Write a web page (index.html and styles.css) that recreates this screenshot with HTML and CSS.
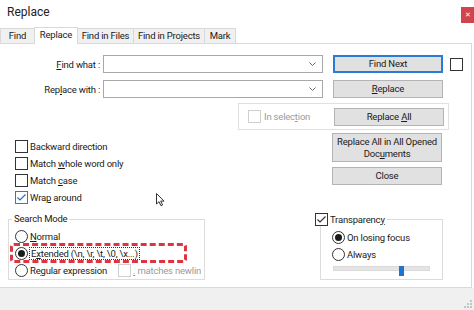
FILE: index.html
```html
<!DOCTYPE html>
<html>
<head>
  <title>Replace</title>
  <link rel="stylesheet" href="styles.css">
</head>
<body>
  <div class="titlebar">
    <span class="title">Replace</span>
    <span class="close">&#x2715;</span>
  </div>

  <div class="tabs">
    <span class="tab tab-find">Find</span>
    <span class="tab tab-replace active">Replace</span>
    <span class="tab tab-files">Find in Files</span>
    <span class="tab tab-projects">Find in Projects</span>
    <span class="tab tab-mark">Mark</span>
  </div>

  <div class="panel">
    <div class="row first">
      <label class="field-label"><u>F</u>ind what :</label>
      <div class="combo">
        <svg class="chevron" width="7" height="4" viewBox="0 0 7 4"><polyline points="0.5,0.5 3.5,3.5 6.5,0.5" fill="none" stroke="#666" stroke-width="1"/></svg>
      </div>
      <button class="btn focused">Find Next</button>
      <span class="box side-box"></span>
    </div>
    <div class="row second">
      <label class="field-label">Rep<u>l</u>ace with :</label>
      <div class="combo">
        <svg class="chevron" width="7" height="4" viewBox="0 0 7 4"><polyline points="0.5,0.5 3.5,3.5 6.5,0.5" fill="none" stroke="#666" stroke-width="1"/></svg>
      </div>
      <button class="btn"><u>R</u>eplace</button>
    </div>

    <div class="selbox">
      <span class="box disabled"></span>
      <span class="muted sel-label">In selec<u>t</u>ion</span>
      <button class="btn sel-btn">Replace <u>A</u>ll</button>
    </div>

    <div class="middle">
      <div class="options">
        <div class="opt"><span class="box"></span><span>Backward direction</span></div>
        <div class="opt"><span class="box"></span><span>Match <u>w</u>hole word only</span></div>
        <div class="opt"><span class="box"></span><span>Match <u>c</u>ase</span></div>
        <div class="opt">
          <span class="box blue">
            <svg width="11" height="11" viewBox="0 0 11 11"><polyline points="1.5,5.5 4,8 9.5,2.5" fill="none" stroke="#1f6fc4" stroke-width="1.2"/></svg>
          </span>
          <span>Wra<u>p</u> around</span>
        </div>
      </div>
      <div class="actions">
        <button class="btn tall">Replace All in All Opened<br>Doc<u>u</u>ments</button>
        <button class="btn close-btn">Close</button>
      </div>
    </div>

    <div class="groups">
      <fieldset class="group search-mode">
        <legend>Search Mode</legend>
        <div class="opt radio-row first-radio"><span class="radio"></span><span><u>N</u>ormal</span></div>
        <div class="opt radio-row"><span class="radio on"></span><span class="focus-text">E<u>x</u>tended (\n, \r, \t, \0, \x...)</span></div>
        <div class="opt radio-row">
          <span class="radio"></span><span>Re<u>g</u>ular expression</span>
          <span class="box disabled newline-box"></span>
          <span class="muted newline-text"><u>.</u> matches newline</span>
        </div>
      </fieldset>

      <fieldset class="group transparency">
        <legend>
          <span class="box">
            <svg width="11" height="11" viewBox="0 0 11 11"><polyline points="1.5,5.5 4,8 9.5,2.5" fill="none" stroke="#333" stroke-width="1.2"/></svg>
          </span>
          <span>Transparenc<u>y</u></span>
        </legend>
        <div class="opt radio-row first-radio"><span class="radio on"></span><span>On losing focus</span></div>
        <div class="opt radio-row"><span class="radio"></span><span>Always</span></div>
        <div class="slider">
          <div class="track"></div>
          <div class="thumb"></div>
        </div>
      </fieldset>
    </div>

    <!-- annotation drawn over the screenshot -->
    <div class="highlight"></div>

    <svg class="cursor" width="10" height="14" viewBox="0 0 10 14">
      <path d="M0.5 0.5 L0.5 11 L3 8.7 L5 12.8 L6.6 12 L4.7 8.1 L8 8.1 Z" fill="#fff" stroke="#333" stroke-width="1" stroke-linejoin="round"/>
    </svg>
  </div>

  <div class="footer">
    <svg class="grip" width="8" height="8" viewBox="0 0 8 8">
      <rect x="6" y="0" width="2" height="2" fill="#c4c4c4"/>
      <rect x="3" y="3" width="2" height="2" fill="#c4c4c4"/>
      <rect x="6" y="3" width="2" height="2" fill="#c4c4c4"/>
      <rect x="0" y="6" width="2" height="2" fill="#c4c4c4"/>
      <rect x="3" y="6" width="2" height="2" fill="#c4c4c4"/>
      <rect x="6" y="6" width="2" height="2" fill="#c4c4c4"/>
    </svg>
  </div>
</body>
</html>
```

FILE: styles.css
```css
body {
  margin: 0;
  width: 474px;
  height: 310px;
  overflow: hidden;
  background: #fff;
  color: #1a1a1a;
  font-family: Roboto, "Liberation Sans", sans-serif;
  font-size: 9.5px;
  letter-spacing: -0.2px;
}

u {
  text-decoration-thickness: 1px;
  text-underline-offset: 1px;
}

/* title bar */
.titlebar {
  height: 27px;
  display: flex;
  justify-content: space-between;
  align-items: flex-start;
}

.title {
  margin: 4px 0 0 7px;
  font-size: 12px;
  letter-spacing: 0;
  line-height: 16px;
  color: #222;
}

.close {
  width: 13px;
  height: 16px;
  margin-top: 7px;
  background: #d1444c;
  color: #fff;
  font-size: 7px;
  line-height: 16px;
  text-align: center;
}

/* tabs */
.tabs {
  height: 16px;
  display: flex;
  align-items: flex-end;
  position: relative;
  z-index: 1;
}

.tab {
  box-sizing: border-box;
  height: 15px;
  border: 1px solid #d9d9d9;
  border-bottom: none;
  margin-right: -1px;
  background: #f0f0f0;
  line-height: 14px;
  text-align: center;
}

.tab.active {
  height: 17px;
  margin-bottom: -1px;
  background: #fff;
  line-height: 14px;
}

.tab-find { width: 35px; }
.tab-replace { width: 44px; }
.tab-files { width: 57px; }
.tab-projects { width: 72px; }
.tab-mark { width: 32px; }

/* panel */
.panel {
  position: relative;
  box-sizing: border-box;
  width: 472px;
  height: 245px;
  border: 1px solid #d9d9d9;
  border-left: none;
}

.row {
  display: flex;
  align-items: center;
  height: 18px;
}

.row.first { margin-top: 11px; }
.row.second { margin-top: 7px; }

.field-label {
  width: 100px;
  text-align: right;
}

.combo {
  position: relative;
  box-sizing: border-box;
  width: 220px;
  height: 18px;
  margin-left: 3px;
  border: 1px solid #a8a8a8;
  background: #fff;
}

.chevron {
  position: absolute;
  right: 6px;
  top: 6px;
}

.btn {
  box-sizing: border-box;
  width: 110px;
  height: 18px;
  margin: 0 0 0 10px;
  padding: 0;
  border: 1px solid #b4b4b4;
  background: #e1e1e1;
  font: inherit;
  letter-spacing: inherit;
  color: #1a1a1a;
  line-height: 12px;
  white-space: nowrap;
}

.btn.focused {
  border: 2px solid #2a7bd6;
}

.side-box {
  margin-left: 7px;
}

/* check boxes and radios */
.box {
  box-sizing: border-box;
  display: inline-flex;
  align-items: center;
  justify-content: center;
  width: 13px;
  height: 13px;
  border: 1px solid #333;
  background: #fff;
  flex: none;
}

.box.blue { border-color: #2a7bd6; }
.box.disabled { border-color: #cfcfcf; }

.radio {
  box-sizing: border-box;
  display: inline-flex;
  align-items: center;
  justify-content: center;
  width: 13px;
  height: 13px;
  border: 1px solid #333;
  border-radius: 50%;
  background: #fff;
  flex: none;
}

.radio.on::after {
  content: "";
  width: 7px;
  height: 7px;
  border-radius: 50%;
  background: #1a1a1a;
}

.muted { color: #9a9a9a; }

/* in selection group */
.selbox {
  box-sizing: border-box;
  display: flex;
  align-items: center;
  width: 211px;
  height: 27px;
  margin: 5px 0 0 238px;
  border: 1px solid #e0e0e0;
}

.selbox .box { margin-left: 9px; }

.sel-label { margin-left: 3px; }

.sel-btn { margin-left: auto; margin-right: 4px; }

/* options + big buttons */
.middle {
  display: flex;
  margin-top: 3px;
}

.options {
  width: 317px;
  margin-left: 15px;
  padding-top: 5px;
}

.opt {
  display: flex;
  align-items: center;
  height: 17px;
  gap: 2px;
  white-space: nowrap;
}

.actions {
  display: flex;
  flex-direction: column;
}

.actions .btn { margin-left: 0; }

.btn.tall { height: 29px; }

.close-btn { margin-top: 5px; }

/* bottom groups */
.groups {
  display: flex;
  align-items: flex-start;
  margin-top: 7px;
}

.group {
  box-sizing: border-box;
  height: 67px;
  margin: 0;
  padding: 0;
  min-width: 0;
  border: 1px solid #dcdcdc;
}

.group legend {
  padding: 0 2px;
  line-height: 12px;
}

.search-mode {
  width: 197px;
  margin-left: 8px;
}

.search-mode legend { margin-left: 3px; }

.search-mode .radio-row { margin-left: 6px; }

.first-radio { margin-top: 3px; }

.focus-text {
  outline: 1px dotted #333;
  outline-offset: 0;
  padding: 0 1px;
}

.newline-box { margin-left: 9px; }

.newline-text {
  width: 68px;
  overflow: hidden;
}

.transparency {
  width: 123px;
  margin-left: 115px;
}

.transparency legend {
  display: flex;
  align-items: center;
  gap: 2px;
  margin-left: -6px;
  padding: 0 2px 0 0;
}

.transparency .radio-row { margin-left: 11px; }

.slider {
  position: relative;
  width: 97px;
  height: 10px;
  margin: 0 0 0 12px;
}

.track {
  margin-top: 3px;
  height: 3px;
  background: #e4e4e4;
  border: 1px solid #dadada;
}

.thumb {
  position: absolute;
  left: 66px;
  top: 0;
  width: 5px;
  height: 10px;
  background: #1f72d0;
}

/* overlays */
.highlight {
  position: absolute;
  left: 10px;
  top: 199px;
  box-sizing: border-box;
  width: 177px;
  height: 20px;
  border: 3px dashed #dc3440;
  border-radius: 4px;
}

.cursor {
  position: absolute;
  left: 156px;
  top: 149px;
}

/* footer strip */
.footer {
  position: relative;
  height: 22px;
  background: #f0f0f0;
}

.grip {
  position: absolute;
  right: 2px;
  bottom: 2px;
}
```
